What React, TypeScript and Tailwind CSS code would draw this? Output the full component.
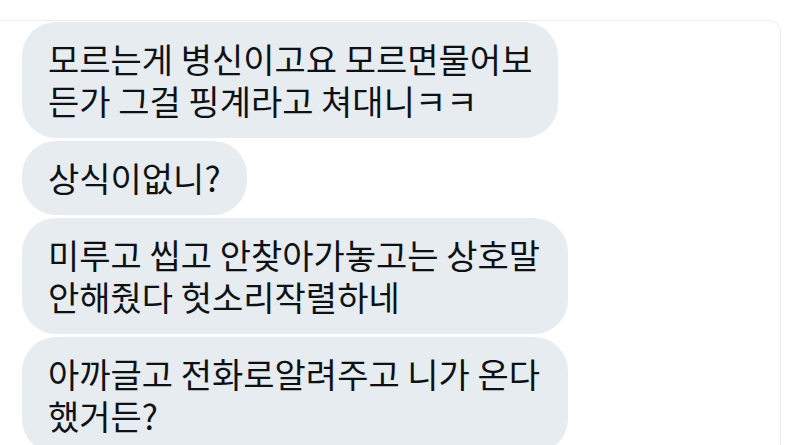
import React from "react";

const MESSAGES = [
  { lines: ["모르는게 병신이고요 모르면물어보", "든가 그걸 핑계라고 쳐대니ㅋㅋ"], wide: false },
  { lines: ["상식이없니?"], wide: false },
  { lines: ["미루고 씹고 안찾아가놓고는 상호말", "안해줬다 헛소리작렬하네"], wide: true },
  { lines: ["아까글고 전화로알려주고 니가 온다", "했거든?"], wide: true },
];

function Bubble({ lines, wide }: { lines: string[]; wide: boolean }) {
  return (
    <div
      className={`${wide ? "w-[546px]" : "w-fit"} rounded-[34px] bg-[#e6ecf0] pl-[26px] pr-[26px] py-[16px] text-[34px] leading-[42px] text-[#0f1215] whitespace-nowrap`}
    >
      {lines.map((l, i) => (
        <div key={i}>{l}</div>
      ))}
    </div>
  );
}

export default function App() {
  return (
    <div
      className="w-[800px] h-[445px] overflow-hidden bg-white pt-[20px]"
      style={{ fontFamily: '"Noto Sans CJK KR", "Noto Sans", sans-serif' }}
    >
      <div className="ml-[-1px] w-[782px] h-[500px] border border-[#e9ecee] rounded-tr-[12px] pt-[1px] pl-[22px]">
        <div className="flex flex-col gap-[3px]">
          {MESSAGES.map((m, i) => (
            <Bubble key={i} lines={m.lines} wide={m.wide} />
          ))}
        </div>
      </div>
    </div>
  );
}
